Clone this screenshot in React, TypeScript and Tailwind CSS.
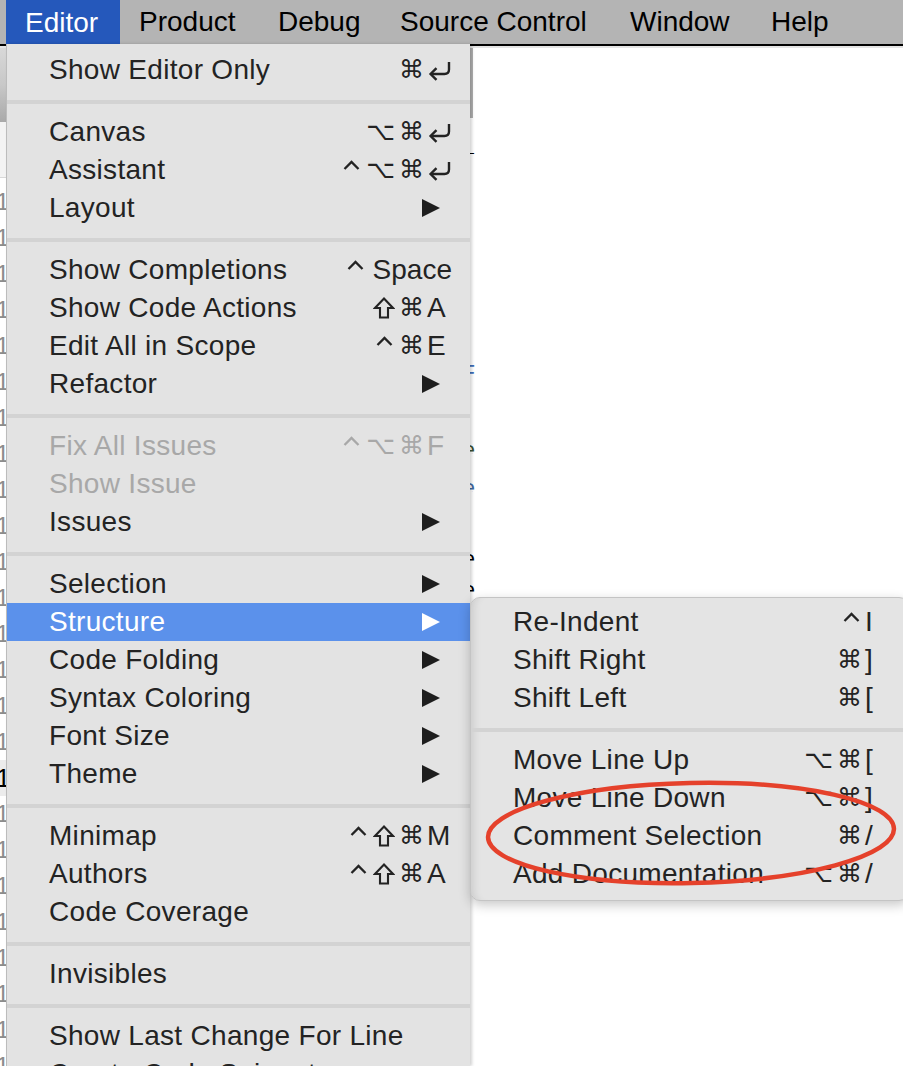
import React from "react";

type Item =
  | { sep: true }
  | {
      sep?: false;
      label: string;
      mods?: string[];
      keyc?: string;
      arrow?: boolean;
      disabled?: boolean;
      active?: boolean;
    };

const mainItems: Item[] = [
  { label: "Show Editor Only", mods: ["cmd"], keyc: "ret" },
  { sep: true },
  { label: "Canvas", mods: ["opt", "cmd"], keyc: "ret" },
  { label: "Assistant", mods: ["ctrl", "opt", "cmd"], keyc: "ret" },
  { label: "Layout", arrow: true },
  { sep: true },
  { label: "Show Completions", mods: ["ctrl"], keyc: "Space" },
  { label: "Show Code Actions", mods: ["shift", "cmd"], keyc: "A" },
  { label: "Edit All in Scope", mods: ["ctrl", "cmd"], keyc: "E" },
  { label: "Refactor", arrow: true },
  { sep: true },
  { label: "Fix All Issues", mods: ["ctrl", "opt", "cmd"], keyc: "F", disabled: true },
  { label: "Show Issue", disabled: true },
  { label: "Issues", arrow: true },
  { sep: true },
  { label: "Selection", arrow: true },
  { label: "Structure", arrow: true, active: true },
  { label: "Code Folding", arrow: true },
  { label: "Syntax Coloring", arrow: true },
  { label: "Font Size", arrow: true },
  { label: "Theme", arrow: true },
  { sep: true },
  { label: "Minimap", mods: ["ctrl", "shift", "cmd"], keyc: "M" },
  { label: "Authors", mods: ["ctrl", "shift", "cmd"], keyc: "A" },
  { label: "Code Coverage" },
  { sep: true },
  { label: "Invisibles" },
  { sep: true },
  { label: "Show Last Change For Line" },
  { label: "Create Code Snippet" },
];

const subItems: Item[] = [
  { label: "Re-Indent", mods: ["ctrl"], keyc: "I" },
  { label: "Shift Right", mods: ["cmd"], keyc: "]" },
  { label: "Shift Left", mods: ["cmd"], keyc: "[" },
  { sep: true },
  { label: "Move Line Up", mods: ["opt", "cmd"], keyc: "[" },
  { label: "Move Line Down", mods: ["opt", "cmd"], keyc: "]" },
  { label: "Comment Selection", mods: ["cmd"], keyc: "/" },
  { label: "Add Documentation", mods: ["opt", "cmd"], keyc: "/" },
];

function Arrow({ white }: { white?: boolean }) {
  return (
    <svg width="18" height="18" viewBox="0 0 18 18" className="mr-[17px] shrink-0">
      <polygon points="0,0 18,9 0,18" fill={white ? "#ffffff" : "#1e1e1e"} />
    </svg>
  );
}

function Mod({ m }: { m: string }) {
  if (m === "ctrl") {
    return (
      <svg width="17" height="10" viewBox="0 0 17 10" className="mb-[11px] mr-[2px] shrink-0">
        <polyline points="1.5,9 8.5,2 15.5,9" fill="none" stroke="currentColor" strokeWidth="2.3" />
      </svg>
    );
  }
  if (m === "shift") {
    return (
      <svg width="22" height="22" viewBox="0 0 22 22" className="shrink-0">
        <path d="M11 1.6 L20 11 H15 V20.5 H7 V11 H2 Z" fill="none" stroke="currentColor" strokeWidth="2.1" strokeLinejoin="miter" />
      </svg>
    );
  }
  if (m === "opt") {
    return <span className="font-['DejaVu_Sans',sans-serif] text-[25px]">⌥</span>;
  }
  return <span className="font-['DejaVu_Sans',sans-serif] text-[25px]">⌘</span>;
}

function Key({ k }: { k: string }) {
  if (k === "ret") {
    return (
      <span className="flex min-w-[33px] items-center pl-[3px]">
        <svg width="25" height="21" viewBox="0 0 25 21" className="shrink-0">
          <path d="M22 2 V9.5 Q22 14 17.5 14 H4" fill="none" stroke="currentColor" strokeWidth="2.4" />
          <path d="M9.5 8.2 L3.6 14 L9.5 19.8" fill="none" stroke="currentColor" strokeWidth="2.4" />
        </svg>
      </span>
    );
  }
  return (
    <span className={`min-w-[33px] whitespace-nowrap pl-[3px] ${k === "Space" ? "mr-[5px] pl-[7px]" : ""}`}>
      {k}
    </span>
  );
}

function Row({ item }: { item: Item }) {
  if (item.sep) {
    return <div className="mt-[11px] mb-[9px] h-[4px] bg-[#d3d3d3]" />;
  }
  const color = item.active
    ? "text-white bg-[#5b91eb]"
    : item.disabled
    ? "text-[#a8a8a8]"
    : "text-[#232323]";
  return (
    <div className={`flex h-[38px] items-center pl-[42px] pr-[13px] ${color}`}>
      <span className="flex-1 whitespace-nowrap tracking-[0.3px]">{item.label}</span>
      {item.keyc && (
        <span className="flex items-center">
          <span className="flex items-center gap-[4px]">
            {item.mods?.map((m, i) => (
              <Mod key={i} m={m} />
            ))}
          </span>
          <Key k={item.keyc} />
        </span>
      )}
      {item.arrow && <Arrow white={item.active} />}
    </div>
  );
}

function Frag({ h, mt, color, ch }: { h: number; mt: string; color: string; ch: string }) {
  return (
    <div className={`${mt} flex w-[5px] justify-end overflow-hidden`} style={{ height: h }}>
      <span className={`shrink-0 text-[22px] leading-none ${color}`}>{ch}</span>
    </div>
  );
}

export default function App() {
  const nums = Array.from({ length: 25 }, (_, i) => i);
  return (
    <div className="relative h-[1066px] w-[903px] overflow-hidden bg-white font-['Liberation_Sans','DejaVu_Sans',sans-serif] text-[28px]">
      {/* Menu bar */}
      <div className="flex h-[44px] items-center bg-[#b4b4b4] pl-[6px] text-black">
        <div className="flex h-[45px] w-[114px] items-center self-start bg-[#2558bb] pl-[19px] text-white">Editor</div>
        <div className="w-[139px] pl-[19px]">Product</div>
        <div className="w-[122px] pl-[19px]">Debug</div>
        <div className="w-[230px] whitespace-nowrap pl-[19px]">Source Control</div>
        <div className="w-[141px] pl-[19px]">Window</div>
        <div className="w-[96px] pl-[19px]">Help</div>
      </div>
      <div className="h-[1.5px] bg-black" />
      <div className="h-[2px] bg-[#e4e4e4]" />

      {/* Editor behind */}
      <div className="flex">
        <div className="flex w-[6px] flex-col overflow-hidden">
          <div className="h-[74px] bg-gradient-to-b from-[#d8d8d8] via-[#c8c8c8] to-[#a9a9a9]" />
          <div className="h-[56px] border-b border-[#d8d8d8] bg-[#f3f3f3]" />
          <div className="flex flex-col pt-[6px] text-[24px] leading-[36px] text-[#8c8c8c]">
            {nums.map((i) => (
              <div
                key={i}
                className={`-ml-[4px] h-[36px] ${i === 16 ? "bg-[#ececec] text-[26px] text-black" : ""}`}
              >
                1
              </div>
            ))}
          </div>
        </div>
        <div className="w-[464px]" />
        <div className="flex w-[6px] flex-col">
          <div className="h-[70px] w-[3px] bg-[#b0b0b0]" />
          <Frag h={8} mt="mt-[28px]" color="text-black" ch="=" />
          <Frag h={17} mt="mt-[208px]" color="text-[#3f6db8]" ch="F" />
          <Frag h={15} mt="mt-[60px]" color="text-[#3b4f33]" ch="e" />
          <Frag h={15} mt="mt-[23px]" color="text-[#41689f]" ch="e" />
          <Frag h={13} mt="mt-[56px]" color="text-black" ch="e" />
          <Frag h={13} mt="mt-[18px]" color="text-black" ch="e" />
        </div>
        <div className="flex-1" />
      </div>

      {/* Main Editor menu */}
      <div className="absolute left-[6px] top-[44px] bottom-0 w-[464px] border-l border-[#bcbcbc] bg-[#e3e3e3] pt-[7px] shadow-[2px_0_3px_rgba(0,0,0,0.18)]">
        {mainItems.map((it, i) => (
          <Row key={i} item={it} />
        ))}
      </div>

      {/* Structure submenu */}
      <div className="absolute left-[470px] top-[597px] w-[439px] rounded-[10px] border border-[#c4c4c4] bg-[#e4e4e4] pt-[5px] pb-[7px] shadow-[0_4px_12px_rgba(0,0,0,0.22),inset_10px_0_8px_-8px_rgba(0,0,0,0.12)]">
        {subItems.map((it, i) => (
          <Row key={i} item={it} />
        ))}
      </div>

      {/* Red annotation ellipse */}
      <svg
        className="pointer-events-none absolute left-[480px] top-[770px]"
        width="423"
        height="126"
        viewBox="0 0 423 126"
      >
        <ellipse
          cx="211"
          cy="63"
          rx="203"
          ry="50"
          fill="none"
          stroke="#e5412b"
          strokeWidth="4.5"
          transform="rotate(-1.2 211 63)"
        />
      </svg>
    </div>
  );
}
